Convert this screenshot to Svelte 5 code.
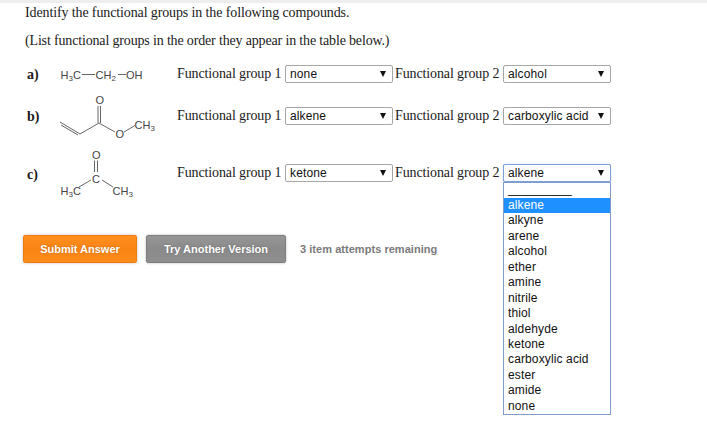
<script>
  const options = ['alkene','alkyne','arene','alcohol','ether','amine','nitrile','thiol','aldehyde','ketone','carboxylic acid','ester','amide','none'];
</script>

<div class="page">
  <p class="line first">Identify the functional groups in the following compounds.</p>
  <p class="line second">(List functional groups in the order they appear in the table below.)</p>

  <div class="row row-a">
    <b class="tag">a)</b>
    <svg class="mol" width="118" height="35" viewBox="59 60 118 35">
      <text x="60.5" y="78.5">H<tspan class="sub" dy="2">3</tspan><tspan dy="-2">C</tspan></text>
      <line x1="82" y1="74.5" x2="95" y2="74.5"/>
      <text x="95.5" y="78.5">CH<tspan class="sub" dy="2">2</tspan></text>
      <line x1="118" y1="74.5" x2="126" y2="74.5"/>
      <text x="126" y="78.5">OH</text>
    </svg>
    <div class="controls">
      <span class="lbl">Functional group 1</span>
      <div class="select"><span>none</span><i class="arrow"></i></div>
      <span class="lbl">Functional group 2</span>
      <div class="select"><span>alcohol</span><i class="arrow"></i></div>
    </div>
  </div>

  <div class="row row-b">
    <b class="tag">b)</b>
    <svg class="mol" width="118" height="52" viewBox="59 95 118 52">
      <text x="95.5" y="104">O</text>
      <line x1="98" y1="106" x2="98" y2="123"/>
      <line x1="100.5" y1="106" x2="100.5" y2="123"/>
      <line x1="60" y1="122" x2="80" y2="134"/>
      <line x1="61" y1="125" x2="78" y2="135"/>
      <line x1="80" y1="134" x2="99" y2="123"/>
      <line x1="99" y1="123" x2="115" y2="132"/>
      <text x="115.5" y="138">O</text>
      <line x1="124" y1="132" x2="135" y2="125.5"/>
      <text x="134.5" y="129">CH<tspan class="sub" dy="2">3</tspan></text>
    </svg>
    <div class="controls">
      <span class="lbl">Functional group 1</span>
      <div class="select"><span>alkene</span><i class="arrow"></i></div>
      <span class="lbl">Functional group 2</span>
      <div class="select"><span>carboxylic acid</span><i class="arrow"></i></div>
    </div>
  </div>

  <div class="row row-c">
    <b class="tag">c)</b>
    <svg class="mol" width="118" height="58" viewBox="59 147 118 58">
      <text x="92" y="159">O</text>
      <line x1="94.5" y1="160.5" x2="94.5" y2="172"/>
      <line x1="97.5" y1="160.5" x2="97.5" y2="172"/>
      <text x="92" y="182.5">C</text>
      <line x1="79" y1="187" x2="91" y2="180"/>
      <line x1="102" y1="180" x2="113" y2="187"/>
      <text x="60.5" y="194.5">H<tspan class="sub" dy="2">3</tspan><tspan dy="-2">C</tspan></text>
      <text x="112.5" y="194.5">CH<tspan class="sub" dy="2">3</tspan></text>
    </svg>
    <div class="controls">
      <span class="lbl">Functional group 1</span>
      <div class="select"><span>ketone</span><i class="arrow"></i></div>
      <span class="lbl">Functional group 2</span>
      <div class="select open">
        <span>alkene</span><i class="arrow"></i>
        <ul class="menu">
          <li class="blank">__________</li>
          {#each options as o, i}
            <li class:active={i === 0}>{o}</li>
          {/each}
        </ul>
      </div>
    </div>
  </div>

  <div class="actions">
    <button class="btn submit">Submit Answer</button>
    <button class="btn other">Try Another Version</button>
    <span class="attempts">3 item attempts remaining</span>
  </div>
</div>

<style>
  :global(body) { margin: 0; background: #fff; }
  .page {
    height: 442px;
    box-sizing: border-box;
    border-top: 3px solid #eeeeee;
    font-family: "Liberation Serif", "Times New Roman", serif;
    font-size: 14px;
    color: #1a1a1a;
    overflow: hidden;
  }
  .line { margin: 0; padding-left: 25px; line-height: 20px; }
  .first { letter-spacing: -0.12px; }
  .second { margin-top: 8px; height: 29px; letter-spacing: -0.16px; }
  .row { display: grid; grid-template-columns: 34px 118px 1fr; margin-left: 25px; }
  .row-a { height: 35px; }
  .row-b { height: 52px; }
  .row-c { height: 58px; }
  .tag { padding-left: 2px; line-height: 18px; }
  .row-a .tag { margin-top: 6px; }
  .row-a .controls { margin-top: 5px; }
  .row-b .tag { margin-top: 13px; }
  .row-b .controls { margin-top: 12px; }
  .row-c .tag { margin-top: 19px; }
  .row-c .controls { margin-top: 17px; }
  .mol { display: block; overflow: visible; }
  .mol text { font: 11px "Liberation Sans", Arial, sans-serif; fill: #444; }
  .mol .sub { font-size: 8px; }
  .mol line { stroke: #555; stroke-width: 0.9; }
  .controls { display: flex; align-items: center; height: 18px; }
  .lbl { line-height: 18px; white-space: nowrap; width: 108px; letter-spacing: -0.12px; }
  .select {
    position: relative;
    flex: none;
    box-sizing: border-box;
    width: 108px;
    height: 18px;
    margin-right: 2px;
    padding-left: 4px;
    border: 1px solid #a6a6a6;
    border-radius: 2px;
    background: #fff;
    font: 12px/16px "Liberation Sans", Arial, sans-serif;
    letter-spacing: 0.13px;
    color: #111;
  }
  .arrow {
    position: absolute;
    right: 6px;
    top: 5px;
    width: 0;
    height: 0;
    border-left: 3.5px solid transparent;
    border-right: 3.5px solid transparent;
    border-top: 6px solid #111;
  }
  .open { border-color: #7e9fd8; box-shadow: 0 0 1px #7e9fd8; }
  .menu {
    position: absolute;
    left: -1px;
    top: 17px;
    z-index: 2;
    box-sizing: border-box;
    width: 108px;
    margin: 0;
    padding: 0;
    list-style: none;
    background: #fff;
    border: 1px solid #7f9ccb;
  }
  .menu li { height: 15.45px; line-height: 15.45px; padding-left: 4px; }
  .menu .blank { height: 15px; line-height: 13px; letter-spacing: -0.35px; }
  .menu .active { background: #1e90ff; color: #fff; }
  .actions { display: flex; align-items: center; margin: 30px 0 0 23px; }
  .btn {
    box-sizing: border-box;
    height: 28px;
    padding: 0;
    border-radius: 2px;
    color: #fff;
    font: bold 11px "Liberation Sans", Arial, sans-serif;
    text-shadow: 0 0 2px rgba(0, 0, 0, 0.25);
    box-shadow: 0 0 3px rgba(0, 0, 0, 0.25);
  }
  .submit {
    width: 114px;
    margin-right: 9px;
    border: 1px solid #ee7a10;
    background: linear-gradient(#ff8f1f, #f98414 50%, #ff8c1c);
  }
  .other {
    width: 140px;
    margin-right: 14px;
    border: 1px solid #7d7d7d;
    background: linear-gradient(#969696, #8a8a8a 50%, #8f8f8f);
  }
  .attempts { font: bold 11px "Liberation Sans", Arial, sans-serif; color: #7a7a7a; letter-spacing: 0.04px; }
</style>
